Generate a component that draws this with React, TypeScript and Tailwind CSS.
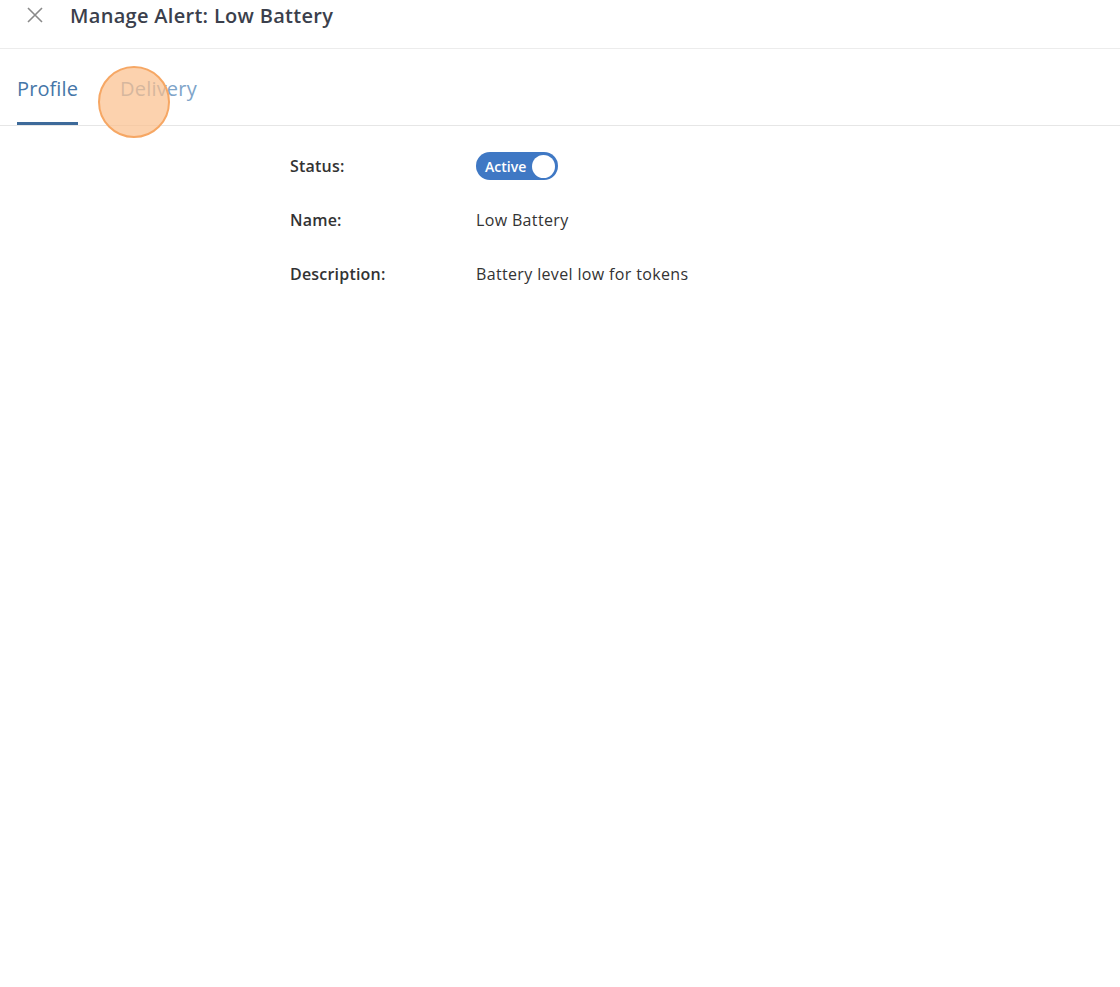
import React from 'react';

const App: React.FC = () => {
  return (
    <div className="relative min-h-[987px] w-full bg-white text-[#333] font-['Open_Sans','Noto_Sans',sans-serif]">
      {/* Header */}
      <div className="flex h-[49px] items-start border-b border-[#ececec] pt-[3px]">
        <button className="ml-[25px] flex h-[24px] w-[20px] items-center justify-center text-[#8a8a8a]">
          <svg width="18" height="18" viewBox="0 0 18 18" fill="none" stroke="currentColor" strokeWidth="1.6">
            <path d="M2 2 L16 16 M16 2 L2 16" />
          </svg>
        </button>
        <h1 className="ml-[25px] text-[20px] font-semibold leading-[26px] tracking-[0.3px] text-[#3b3f4c]">Manage Alert: Low Battery</h1>
      </div>

      {/* Tabs */}
      <div className="flex h-[77px] items-stretch gap-[42px] border-b border-[#e6e6e6] px-[17px]">
        <div className="flex items-center border-b-[3px] border-[#3d6a9a] pt-[7px] text-[20px] tracking-[0.1px] text-[#4576a8]">Profile</div>
        <div className="flex items-center pt-[4px] text-[20px] tracking-[0.2px] text-[#7ea4c9]">Delivery</div>
      </div>

      {/* Fields */}
      <div className="ml-[290px] mt-[13px] flex flex-col text-[16px]">
        <div className="flex h-[54px] items-center">
          <div className="w-[186px] font-semibold tracking-[0.2px] text-[#333]">Status:</div>
          <div className="flex h-[28px] w-[82px] items-center justify-between rounded-full bg-[#3f78c4] pl-[9px] pr-[3px]">
            <span className="text-[14px] font-semibold text-white">Active</span>
            <span className="h-[23px] w-[23px] rounded-full bg-white"></span>
          </div>
        </div>
        <div className="flex h-[54px] items-center">
          <div className="w-[186px] font-semibold tracking-[0.2px] text-[#333]">Name:</div>
          <div className="tracking-[0.35px] text-[#333]">Low Battery</div>
        </div>
        <div className="flex h-[54px] items-center">
          <div className="w-[186px] font-semibold tracking-[0.2px] text-[#333]">Description:</div>
          <div className="tracking-[0.35px] text-[#333]">Battery level low for tokens</div>
        </div>
      </div>

      {/* click indicator */}
      <div className="absolute left-[98px] top-[66px] h-[72px] w-[72px] rounded-full border-2 border-[#f6a764] bg-[#fbbf8c]/70"></div>
    </div>
  );
};

export default App;
